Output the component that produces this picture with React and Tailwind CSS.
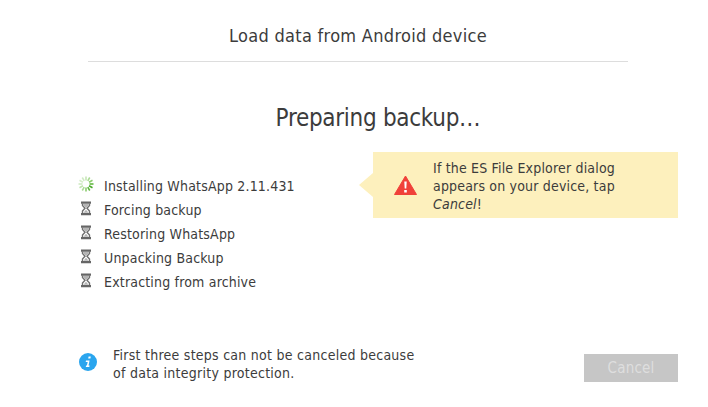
function Hourglass() {
  return (
    <svg width="12" height="15" viewBox="0 0 12 15" className="-mt-[4px] shrink-0">
      <path d="M1 .5h10v2.2H1zM1 12h10v2.2H1z" fill="#666" />
      <path d="M2.5 2.5 L2.5 4.5 L5 7.2 L2.5 10 L2.5 12 M9.5 2.5 L9.5 4.5 L7 7.2 L9.5 10 L9.5 12" fill="none" stroke="#707070" strokeWidth="1.4" />
      <path d="M3.5 11.8 L6 8.8 L8.5 11.8Z M3.2 3 L8.8 3 L8.8 4.4 L6 7 L3.2 4.4Z" fill="#b4b4b4" />
    </svg>
  );
}
function Spinner() {
  const bars = [0, 30, 60, 90, 120, 150, 180, 210, 240, 270, 300, 330];
  const colors = ["#c6e6b6", "#a9da92", "#8ccd6e", "#62b842", "#4aa92a", "#5cb43c", "#8acb6c", "#a9da92", "#c0e3ae", "#cfeac2", "#d6edca", "#d0ebc4"];
  return (
    <svg width="16" height="16" viewBox="0 0 16 16" className="-mt-[4px] shrink-0">
      {bars.map((a, i) => (
        <line key={a} x1="8" y1="0.5" x2="8" y2="4.5" stroke={colors[i]} strokeWidth="1.6" transform={`rotate(${a} 8 8)`} />
      ))}
    </svg>
  );
}
function Step({ icon, label }) {
  return (
    <div className="flex h-6 items-center">
      <div className="flex w-4 justify-center">{icon}</div>
      <span className="ml-[10px]">{label}</span>
    </div>
  );
}
export default function App() {
  return (
    <div className="flex h-[407px] w-[708px] flex-col overflow-hidden bg-white font-['DejaVu_Sans','Noto_Sans',sans-serif] font-stretch-condensed text-[14px] tracking-[0.18px] text-[#3c3c3c]">
      <div className="mx-[88px] flex h-[62px] w-[540px] items-end justify-center border-b border-[#dddddd] pb-[13px] text-[18px] leading-6 tracking-[0.3px]">
        Load data from Android device
      </div>
      <div className="mt-[40px] pl-[48px] text-center text-[24px] leading-8 tracking-[-0.3px]">Preparing backup…</div>
      <div className="mt-[18px] flex items-start">
        <div className="ml-[78px] mt-[22px] w-[281px]">
          <Step icon={<Spinner />} label="Installing WhatsApp 2.11.431" />
          <Step icon={<Hourglass />} label="Forcing backup" />
          <Step icon={<Hourglass />} label="Restoring WhatsApp" />
          <Step icon={<Hourglass />} label="Unpacking Backup" />
          <Step icon={<Hourglass />} label="Extracting from archive" />
        </div>
        <div className="flex items-center">
          <div className="h-0 w-0 border-y-[12px] border-r-[14px] border-y-transparent border-r-[#fdf0bd]" />
          <div className="flex h-[66px] w-[305px] items-center bg-[#fdf0bd] pl-[21px]">
            <svg width="23" height="20" viewBox="0 0 23 20" className="shrink-0">
              <path d="M11.5 1 L22.5 19.5 H0.5Z" fill="#f0413a" stroke="#f0413a" strokeLinejoin="round" />
              <path d="M10.3 6.5h2.4l-.4 7h-1.6z M10.2 15h2.6v2.6h-2.6z" fill="#fff" />
            </svg>
            <div className="ml-[16px] w-[200px] pt-px leading-[18px]">
              If the ES File Explorer dialog appears on your device, tap <i>Cancel</i>!
            </div>
          </div>
        </div>
      </div>
      <div className="mt-auto mb-[25px] flex items-center pl-[79px] pr-[30px]">
        <svg width="18" height="18" viewBox="0 0 18 18" className="mb-1 shrink-0">
          <circle cx="9" cy="9" r="9" fill="#2aa5ee" />
          <path d="M9.6 3.6h2.2l-.4 2H9.2z M7 7.6h3.6L9.5 12.6h1.1l-.3 1.4H6.8l.3-1.4h.8l.8-3.6H6.7z" fill="#fff" />
        </svg>
        <div className="ml-4 w-[305px] leading-[18px] tracking-[0.26px]">
          First three steps can not be canceled because of data integrity protection.
        </div>
        <div className="ml-auto flex h-7 w-[94px] items-center justify-center self-end bg-[#c6c6c6] text-[15px] text-[#dedede]">Cancel</div>
      </div>
    </div>
  );
}
